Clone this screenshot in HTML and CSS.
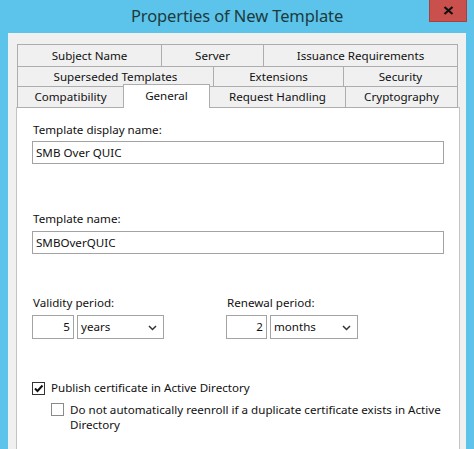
FILE: index.html
```html
<!DOCTYPE html>
<html>
<head>
<meta charset="utf-8">
<title>Properties of New Template</title>
<link rel="stylesheet" href="styles.css">
</head>
<body>
<div class="titlebar">
  <div class="title">Properties of New Template</div>
  <div class="close">
    <svg width="11" height="9" viewBox="0 0 11 9"><path d="M1.5 1 L9.5 8 M9.5 1 L1.5 8" stroke="#111" stroke-width="2.2" fill="none"/></svg>
  </div>
</div>
<div class="dialog">
  <div class="tabs">
    <div class="tabrow">
      <div class="tab w-subject">Subject Name</div>
      <div class="tab w-server">Server</div>
      <div class="tab w-issuance">Issuance Requirements</div>
    </div>
    <div class="tabrow">
      <div class="tab w-superseded">Superseded Templates</div>
      <div class="tab w-extensions">Extensions</div>
      <div class="tab w-security">Security</div>
    </div>
    <div class="tabrow row3">
      <div class="tab w-compat">Compatibility</div>
      <div class="tab w-general selected">General</div>
      <div class="tab w-request">Request Handling</div>
      <div class="tab w-crypto">Cryptography</div>
    </div>
  </div>
  <div class="panel">
    <label class="lbl first">Template display name:</label>
    <div class="textbox">SMB Over QUIC</div>
    <label class="lbl second">Template name:</label>
    <div class="textbox">SMBOverQUIC</div>
    <div class="periods">
      <div class="period">
        <label class="lbl">Validity period:</label>
        <div class="period-fields">
          <div class="num w-num1">5</div>
          <div class="select w-sel1"><span>years</span>
            <svg width="9" height="6" viewBox="0 0 9 6"><path d="M1 1 L4.5 4.5 L8 1" stroke="#333" stroke-width="1.5" fill="none"/></svg>
          </div>
        </div>
      </div>
      <div class="period">
        <label class="lbl">Renewal period:</label>
        <div class="period-fields">
          <div class="num w-num2">2</div>
          <div class="select w-sel2"><span>months</span>
            <svg width="9" height="6" viewBox="0 0 9 6"><path d="M1 1 L4.5 4.5 L8 1" stroke="#333" stroke-width="1.5" fill="none"/></svg>
          </div>
        </div>
      </div>
    </div>
    <div class="check publish">
      <span class="box checked">
        <svg width="11" height="11" viewBox="0 0 11 11"><path d="M2 5.5 L4.5 8 L9.5 2.5" stroke="#111" stroke-width="2" fill="none"/></svg>
      </span>
      <span class="ctext">Publish certificate in Active Directory</span>
    </div>
    <div class="check reenroll">
      <span class="box"></span>
      <span class="ctext">Do not automatically reenroll if a duplicate certificate exists in Active Directory</span>
    </div>
  </div>
</div>
</body>
</html>
```
FILE: styles.css
```css
* { box-sizing: border-box; }
html, body { margin: 0; padding: 0; }
body {
  width: 474px;
  height: 449px;
  overflow: hidden;
  background: #5cc4ea;
  font-family: "Noto Sans", "Liberation Sans", sans-serif;
  font-size: 11.6px;
  color: #111;
}
.titlebar {
  height: 33px;
  display: grid;
  grid-template-columns: 1fr auto 1fr;
}
.title {
  grid-column: 2;
  font-size: 16.5px;
  color: #1d3a3d;
  line-height: 32px;
  letter-spacing: -0.1px;
}
.close {
  grid-column: 3;
  justify-self: end;
  align-self: start;
  width: 38px;
  height: 22px;
  margin-right: 7px;
  background: #c9504c;
  border: 1px solid #a8403c;
  border-top: 0;
  display: flex;
  align-items: center;
  justify-content: center;
}
.dialog {
  margin-left: 8px;
  width: 458px;
  height: 416px;
  background: #f0f0f0;
  padding: 11px 0 0 8px;
}
.tabs { margin-left: 1px; }
.tabrow { display: flex; }
.tabrow + .tabrow { margin-top: -1px; }
.tab {
  border: 1px solid #adadad;
  background: #f0f0f0;
  height: 21px;
  text-align: center;
  line-height: 19px;
  white-space: nowrap;
}
.tabrow:first-child .tab { height: 23px; line-height: 21px; }
.row3 .tab { height: 22px; line-height: 20px; }
.tab + .tab { margin-left: -1px; }
.tab.selected {
  background: #fff;
  margin-top: -2px;
  height: 24px;
  line-height: 21px;
  border-bottom: 0;
  position: relative;
  z-index: 1;
}
.w-subject { width: 145px; }
.w-server { width: 103px; }
.w-issuance { width: 195px; }
.w-superseded { width: 197px; }
.w-extensions { width: 131px; }
.w-security { width: 115px; }
.w-compat { width: 107px; }
.w-general { width: 87px; }
.w-request { width: 137px; }
.w-crypto { width: 113px; }

.panel {
  margin-top: -1px;
  width: 444px;
  height: 360px;
  background: #fff;
  border: 1px solid #c3c3c3;
  padding: 0 0 0 15px;
  display: flex;
  flex-direction: column;
  align-items: flex-start;
}
.lbl {
  display: block;
  line-height: 16px;
  margin-left: 1px;
}
.lbl.first { margin-top: 14px; }
.lbl.second { margin-top: 47px; }
.textbox {
  margin-top: 3px;
  width: 412px;
  height: 23px;
  border: 1px solid #a3a3a3;
  padding-left: 3px;
  line-height: 21px;
}
.lbl.second + .textbox { margin-top: 4px; }
.periods {
  margin-top: 41px;
  display: grid;
  grid-template-columns: 194px auto;
}
.period-fields {
  margin-top: 4px;
  display: flex;
  gap: 3px;
}
.num {
  height: 24px;
  border: 1px solid #a3a3a3;
  text-align: right;
  padding-right: 3px;
  line-height: 22px;
}
.w-num1 { width: 42px; }
.w-num2 { width: 41px; }
.select {
  height: 24px;
  border: 1px solid #a3a3a3;
  display: flex;
  align-items: center;
  justify-content: space-between;
  padding: 0 6px 0 3px;
  line-height: 22px;
}
.select svg { margin-top: 1px; }
.w-sel1 { width: 87px; }
.w-sel2 { width: 88px; }
.check {
  display: flex;
  align-items: flex-start;
}
.check.publish { margin-top: 41px; line-height: 16px; }
.check.reenroll { margin-top: 6px; margin-left: 19px; line-height: 15px; width: 400px; }
.box {
  flex: none;
  width: 13px;
  height: 13px;
  border: 1px solid #8a8a8a;
  background: #fff;
  margin-top: 2px;
  margin-right: 6px;
  display: flex;
  align-items: center;
  justify-content: center;
}
.box.checked { border-color: #333; }
.reenroll .box { margin-top: 1px; }
```
